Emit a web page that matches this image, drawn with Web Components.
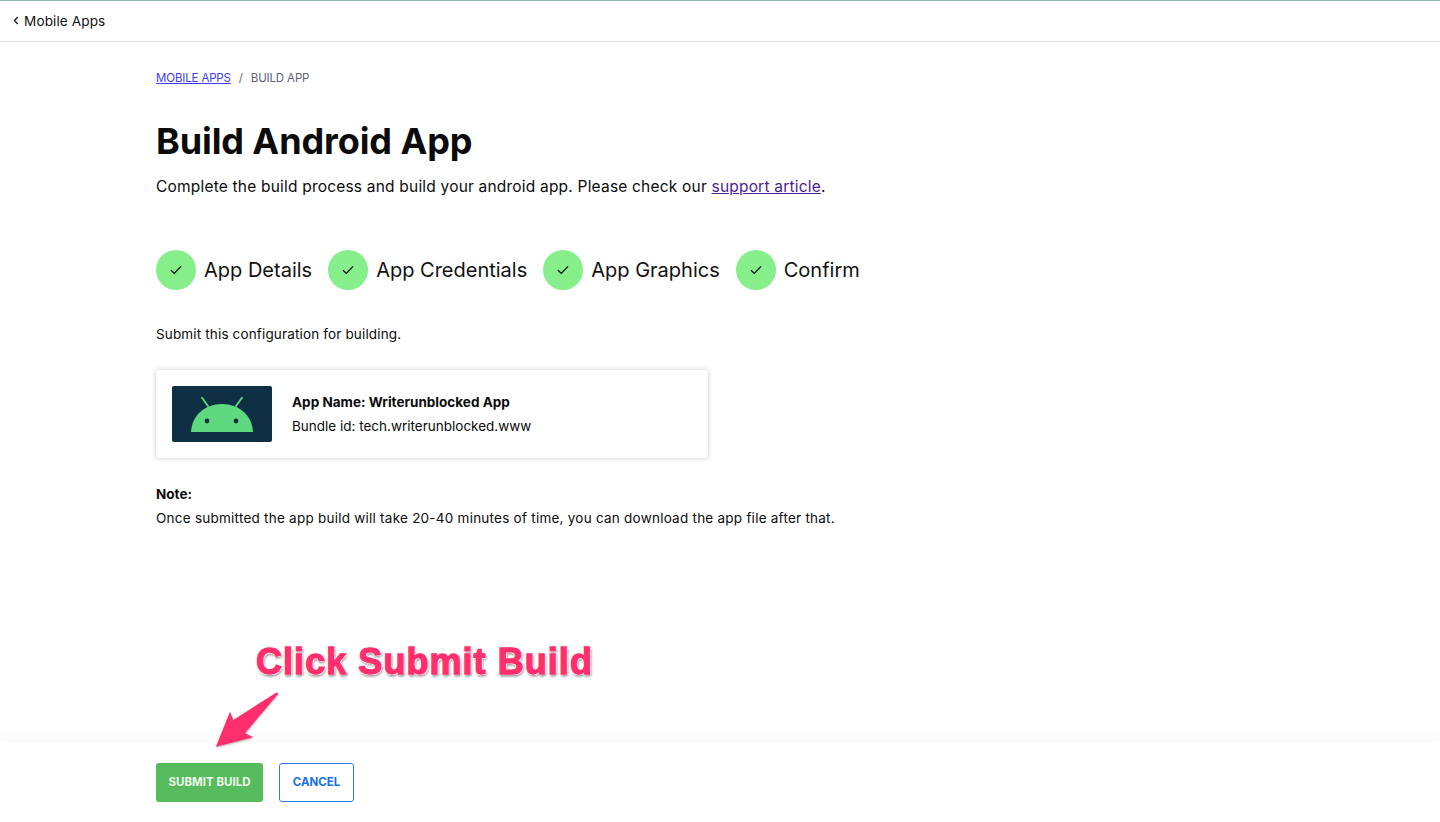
<!DOCTYPE html>
<html lang="en">
<head>
<meta charset="utf-8">
<title>Build Android App</title>
<style>
  html, body { margin: 0; height: 100%; }
  body { font-family: Inter, "Liberation Sans", sans-serif; color: #0b0b0b; background: #fff; overflow: hidden; }
</style>
</head>
<body>
<app-page>
  <top-bar slot="top">Mobile Apps</top-bar>
  <bread-crumbs link="MOBILE APPS" current="BUILD APP"></bread-crumbs>
  <page-heading title="Build Android App">
    Complete the build process and build your android app. Please check our <a href="#" style="color:#4a1d96">support article</a>.
  </page-heading>
  <build-steps>
    <build-step>App Details</build-step>
    <build-step>App Credentials</build-step>
    <build-step>App Graphics</build-step>
    <build-step>Confirm</build-step>
  </build-steps>
  <build-summary></build-summary>
  <footer-bar slot="bottom"></footer-bar>
  <click-note slot="over"></click-note>
</app-page>

<script>
  customElements.define(
    "app-page",
    class extends HTMLElement {
      constructor() {
        super();
        this.attachShadow({ mode: "open" });
        this.shadowRoot.innerHTML = `
        <style>
          :host { display: flex; flex-direction: column; height: 822px; position: relative; }
          main { flex: 1; padding: 0 156px; }
        </style>
        <slot name="top"></slot>
        <main><slot></slot></main>
        <slot name="bottom"></slot>
        <slot name="over"></slot>`;
      }
    },
  );

  customElements.define(
    "top-bar",
    class extends HTMLElement {
      constructor() {
        super();
        this.attachShadow({ mode: "open" });
        this.shadowRoot.innerHTML = `
        <style>
          :host {
            display: flex; align-items: center; gap: 5px; box-sizing: border-box;
            height: 42px; padding: 0 0 1px 13px;
            border-top: 1px solid #8fbabd; border-bottom: 1px solid #e4e4e4;
            font-size: 13.6px; letter-spacing: .1px; color: #111;
          }
          svg { width: 6px; height: 9px; }
        </style>
        <svg viewBox="0 0 6 9" fill="none" stroke="#111" stroke-width="1.2"><path d="M4.8 1 1.4 4.5 4.8 8"/></svg>
        <slot></slot>`;
      }
    },
  );

  customElements.define(
    "bread-crumbs",
    class extends HTMLElement {
      constructor() {
        super();
        this.attachShadow({ mode: "open" });
        this.shadowRoot.innerHTML = `
        <style>
          :host { display: flex; gap: 8px; padding-top: 29px; font-size: 11.5px; line-height: 14px; letter-spacing: -0.15px; color: #5b6179; }
          a { color: #3b3bf0; }
        </style>
        <a href="#">${this.getAttribute("link")}</a><span>/</span><span>${this.getAttribute("current")}</span>`;
      }
    },
  );

  customElements.define(
    "page-heading",
    class extends HTMLElement {
      constructor() {
        super();
        this.attachShadow({ mode: "open" });
        this.shadowRoot.innerHTML = `
        <style>
          :host { display: block; }
          h1 { margin: 33px 0 0; font-size: 36px; line-height: 46px; font-weight: 700; letter-spacing: -0.1px; color: #0b0b0b; }
          p { margin: 12px 0 0; font-size: 15.5px; line-height: 22px; letter-spacing: .2px; }
        </style>
        <h1>${this.getAttribute("title")}</h1>
        <p><slot></slot></p>`;
      }
    },
  );

  customElements.define(
    "build-steps",
    class extends HTMLElement {
      constructor() {
        super();
        this.attachShadow({ mode: "open" });
        this.shadowRoot.innerHTML = `
        <style>
          :host { display: flex; gap: 16px; margin-top: 52px; }
        </style>
        <slot></slot>`;
      }
    },
  );

  customElements.define(
    "build-step",
    class extends HTMLElement {
      constructor() {
        super();
        this.attachShadow({ mode: "open" });
        this.shadowRoot.innerHTML = `
        <style>
          :host { display: flex; align-items: center; gap: 8px; font-size: 20px; line-height: 40px; color: #111; }
          span { width: 40px; height: 40px; border-radius: 50%; background: #86ef8b; display: flex; align-items: center; justify-content: center; }
          svg { width: 12px; height: 10px; }
        </style>
        <span><svg viewBox="0 0 12 10" fill="none" stroke="#111" stroke-width="1.3"><path d="M1 5.2 4.3 8.4 11 1.4"/></svg></span>
        <slot></slot>`;
      }
    },
  );

  customElements.define(
    "build-summary",
    class extends HTMLElement {
      constructor() {
        super();
        this.attachShadow({ mode: "open" });
        this.shadowRoot.innerHTML = `
        <style>
          :host { display: block; font-size: 13.5px; line-height: 20px; margin-top: 34px; }
          .intro { letter-spacing: .15px; }
          .card {
            display: flex; align-items: center; gap: 20px; box-sizing: border-box;
            width: 552px; height: 88px; margin-top: 26px; padding: 0 16px;
            border-radius: 3px; background: #fff;
            box-shadow: 0 0 5px rgba(0,0,0,.22);
          }
          .logo { width: 100px; height: 56px; border-radius: 2px; background: #0f3044; display: flex; align-items: center; justify-content: center; }
          .logo svg { width: 62px; height: 35px; }
          .lines { display: flex; flex-direction: column; gap: 4px; }
          b { font-weight: 700; }
          .name { letter-spacing: .02px; }
          .note { margin-top: 26px; }
          .note div + div { margin-top: 4px; letter-spacing: .24px; }
        </style>
        <div class="intro">Submit this configuration for building.</div>
        <div class="card">
          <div class="logo">
            <svg viewBox="0 0 62 35" fill="#5fd97f">
              <path d="M0 35C1 18 14 7 31 7S61 18 62 35Z"/>
              <path d="M17 9 11 .8M45 9 51 .8" stroke="#5fd97f" stroke-width="1.8" stroke-linecap="round"/>
              <circle cx="16" cy="24" r="2.4" fill="#0f3044"/><circle cx="45" cy="24" r="2.4" fill="#0f3044"/>
            </svg>
          </div>
          <div class="lines">
            <b class="name">App Name: Writerunblocked App</b>
            <span>Bundle id: tech.writerunblocked.www</span>
          </div>
        </div>
        <div class="note">
          <div><b>Note:</b></div>
          <div>Once submitted the app build will take 20-40 minutes of time, you can download the app file after that.</div>
        </div>`;
      }
    },
  );

  customElements.define(
    "footer-bar",
    class extends HTMLElement {
      constructor() {
        super();
        this.attachShadow({ mode: "open" });
        this.shadowRoot.innerHTML = `
        <style>
          :host {
            display: flex; gap: 16px; align-items: flex-start; box-sizing: border-box;
            height: 80px; padding: 21px 156px 0;
            box-shadow: 0 -6px 10px rgba(0,0,0,.025); background: #fff;
          }
          button { height: 39px; border-radius: 3px; font: 700 11.5px Inter, "Liberation Sans", sans-serif; box-sizing: border-box; padding: 0 0 2px; }
          .go { width: 107px; background: #56bb5c; border: 0; color: #eef8ee; }
          .no { width: 75px; background: #fff; border: 1px solid #2f7de1; color: #1672e6; }
        </style>
        <button class="go">SUBMIT BUILD</button>
        <button class="no">CANCEL</button>`;
      }
    },
  );

  customElements.define(
    "click-note",
    class extends HTMLElement {
      constructor() {
        super();
        this.attachShadow({ mode: "open" });
        this.shadowRoot.innerHTML = `
        <style>
          :host { position: absolute; left: 214px; top: 640px; display: block; }
          div {
            position: absolute; left: 42px; top: 0; white-space: nowrap;
            font: 700 36px "Liberation Sans", Arial, sans-serif; line-height: 44px; letter-spacing: 1.05px;
            color: #ff2f6d; -webkit-text-stroke: 1.3px #ff2f6d;
            text-shadow: 0 0 2px #fff, 1px 1px 0 #fff, -1px -1px 0 #fff, 1px -1px 0 #fff, -1px 1px 0 #fff, 2px 2px 2px #aaa, 0 3px 2px #bbb;
          }
          svg { position: absolute; left: 0; top: 50px; width: 66px; height: 60px; filter: drop-shadow(0 1px 1px rgba(0,0,0,.3)); overflow: visible; }
        </style>
        <div>Click Submit Build</div>
        <svg viewBox="0 0 66 60"><path fill="#ff2f6d" d="M62.5 2.5C64 2.6 64.4 3.6 63.7 4.4L31 43.3 39.3 47.3 2 56.7 16 21.7 19.3 30Z"/></svg>`;
      }
    },
  );
</script>
</body>
</html>
